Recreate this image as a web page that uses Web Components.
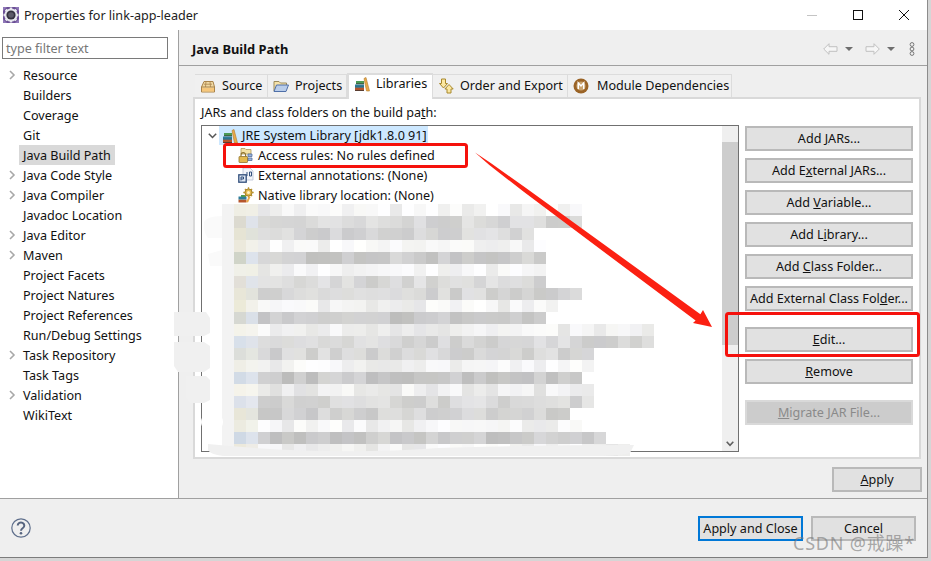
<!DOCTYPE html>
<html>
<head>
<meta charset="utf-8">
<title>Properties for link-app-leader</title>
<style>
  html, body { margin: 0; height: 100%; overflow: hidden; background: #d6d6d6; }
  body { position: relative; }
</style>
</head>
<body>

<props-dialog>
  <win-title slot="title" label="Properties for link-app-leader"></win-title>
  <pref-nav slot="nav"></pref-nav>
  <page-head slot="head" label="Java Build Path"></page-head>
  <tab-strip slot="tabs"></tab-strip>
  <span slot="hint">JARs and class folders on the build pa<u>t</u>h:</span>
  <lib-tree slot="tree"></lib-tree>
  <side-button slot="actions"><span>Add <u>J</u>ARs...</span></side-button>
  <side-button slot="actions"><span>Add E<u>x</u>ternal JARs...</span></side-button>
  <side-button slot="actions"><span>Add <u>V</u>ariable...</span></side-button>
  <side-button slot="actions"><span>Add L<u>i</u>brary...</span></side-button>
  <side-button slot="actions"><span>Add <u>C</u>lass Folder...</span></side-button>
  <side-button slot="actions"><span>Add External Class Fol<u>d</u>er...</span></side-button>
  <side-button slot="actions" class="spaced"><span><u>E</u>dit...</span></side-button>
  <side-button slot="actions"><span><u>R</u>emove</span></side-button>
  <side-button slot="actions" class="spaced" disabled><span><u>M</u>igrate JAR File...</span></side-button>
  <side-button slot="apply" kind="apply"><span><u>A</u>pply</span></side-button>
  <side-button slot="footer" kind="default"><span>Apply and Close</span></side-button>
  <side-button slot="footer" kind="cancel"><span>Cancel</span></side-button>
</props-dialog>
<markup-layer></markup-layer>

<script>
// small pixel style icons, all on a 16 box
const ICONS = {
  gear: `<rect width="16" height="16" rx="1" fill="#6b4f96"/><path d="M0 0h4L0 4zM16 0v4l-4-4zM0 16v-4l4 4zM16 16h-4l4-4z" fill="#8f78b8"/><circle cx="8" cy="8" r="6.6" fill="#e4e4ea"/><path d="M8 .5v3M8 12.5v3M.5 8h3M12.5 8h3M2.7 2.7l2.1 2.1M11.2 11.2l2.1 2.1M13.3 2.7l-2.1 2.1M4.8 11.2l-2.1 2.1" stroke="#e8e8ee" stroke-width="2.4"/><circle cx="8" cy="8" r="4.6" fill="#34323f"/><circle cx="8" cy="8" r="2.8" fill="#5c5a68"/>`,
  source: `<path d="M1.5 9 4 3.5h9l1.5 5.5v5h-13z" fill="#f0d9a4" stroke="#a9834a"/><path d="M1.5 9h13" stroke="#a9834a"/><path d="M6 3.5 5.5 9M10 3.5l.5 5.5M4 6.2h8" stroke="#a9834a" stroke-width=".8"/><path d="M2 10h12v3.500H2z" fill="#f6c77c"/>`,
  folder: `<path d="M1 13V3.500h5l1.500 1.500h6v2" fill="#f6e2a8" stroke="#9a8a5c"/><path d="M1 13.500 3.500 7H15.500L13 13.500z" fill="#b9cdea" stroke="#4f6fa8"/>`,
  books: `<path d="M1 12h9v3H1z" fill="#b5562c"/><path d="M1 8.500h9v3H1z" fill="#2e7d9a"/><path d="M2 5h8v3H2z" fill="#4b9a55"/><path d="M1 14.500h9M2 7.800h8M1 11.300h9" stroke="#333" stroke-width=".7"/><path d="M10 2.500 12 1.500 15.500 15h-3z" fill="#e9a94a" stroke="#b07a2a" stroke-width=".6"/>`,
  order: `<path d="M3.500 1h4v4.500h2L5.500 10 1.500 5.500h2z" fill="#fbe7a0" stroke="#a8882c"/><path d="M11 6.500 15.200 11H13v4H9v-4H6.900z" fill="#fbe7a0" stroke="#a8882c"/>`,
  module: `<circle cx="8" cy="8" r="7.500" fill="#9a6326"/><circle cx="8" cy="8" r="4.600" fill="#c9a36f"/><path d="M5.300 11V5l2.700 3 2.700-3v6" fill="none" stroke="#fff" stroke-width="1.500"/>`,
  rules: `<path d="M3 7V1.500h4l1 1h5V7z" fill="#f4e2a6" stroke="#b09a5a" stroke-width=".8"/><path d="M10 7h4v2.500h-4zM10 11h4v2.500h-4zM8 9v3.300h2" fill="#9db6dc" stroke="#54709f" stroke-width=".8"/><path d="M3 9.500V8a2.300 2.300 0 0 1 4.600 0v1.500" fill="none" stroke="#8f7330" stroke-width="1.200"/><rect x="1" y="9.500" width="8.500" height="6" rx=".6" fill="#e3b94d" stroke="#8f7330" stroke-width=".8"/>`,
  annot: `<path d="M5 1h7l3 3v9H5z" fill="#f2f4f9" stroke="#b9c2d4" stroke-width=".8"/><path d="M9 5v4M11.500 5h2v4h-2z" stroke="#34527f" fill="none"/><rect x=".8" y="7.800" width="7.400" height="7.400" fill="#dfe7f3" stroke="#2f4c7a" stroke-width="1.300"/><path d="M3 13.500V10h2.500v2H3" fill="none" stroke="#2f4c7a"/>`,
  native: `<path d="M.5 12.500h8v3h-8z" fill="#b5562c"/><path d="M.5 9.500h8v3h-8z" fill="#2e7d9a"/><path d="M3 8h5v2H3z" fill="#4b9a55"/><circle cx="10.500" cy="5.500" r="3.600" fill="#e3b94d" stroke="#9a7a2a"/><path d="M10.500.3v2M10.500 8.700v2M5.300 5.500h2M13.700 5.500h2M6.900 1.900l1.400 1.400M12.700 7.700l1.400 1.400M14.100 1.900l-1.400 1.400M8.300 7.700 6.900 9.100" stroke="#b8932f" stroke-width="1.300"/><circle cx="10.500" cy="5.500" r="1.500" fill="#fff3c4"/><path d="M8 15 11 9l1.500 1L10 15.500z" fill="#e9a94a"/>`
};
const icon = (name, size = 16) => `<svg width="${size}" height="${size}" viewBox="0 0 16 16" style="flex:none;display:block">${ICONS[name]}</svg>`;

class PropsDialog extends HTMLElement {
  connectedCallback() {
    this.attachShadow({ mode: 'open' }).innerHTML = `
    <style>
      :host { display: flex; flex-direction: column; width: 928px; height: 558px; box-sizing: border-box;
        background: #efefef; color: #111; border-right: 1px solid #8c8c8c; border-bottom: 1px solid #7c7c7c;
        font: 12.6px "Noto Sans", sans-serif; line-height: 20px; }
      .main { display: flex; height: 468px; }
      .nav { width: 178px; flex: none; background: #fff; border-right: 1px solid #a0a0a0; }
      .page { flex: 1; min-width: 0; display: flex; flex-direction: column; }
      .body { padding: 7px 6px 0 14px; display: flex; flex-direction: column; }
      .folder { box-sizing: border-box; height: 362px; border: 2px solid #d9d9d9; background: #fff; padding: 4px 6px 0 6px; }
      .hint { height: 22px; line-height: 20px; }
      .cols { display: flex; gap: 6px; }
      .actions { display: flex; flex-direction: column; gap: 7px; padding-top: 1px; }
      .apply { display: flex; justify-content: flex-end; margin: 8px -1px 0 0; }
      .foot { box-sizing: border-box; height: 59px; flex: none; border-top: 1px solid #a0a0a0; display: flex;
        align-items: flex-start; padding: 17px 11px 0 11px; gap: 8px; }
      .help { margin: 2px auto 0 0; }
    </style>
    <slot name="title"></slot>
    <div class="main">
      <div class="nav"><slot name="nav"></slot></div>
      <div class="page">
        <slot name="head"></slot>
        <div class="body">
          <slot name="tabs"></slot>
          <div class="folder">
            <div class="hint"><slot name="hint"></slot></div>
            <div class="cols">
              <slot name="tree"></slot>
              <div class="actions"><slot name="actions"></slot></div>
            </div>
          </div>
          <div class="apply"><slot name="apply"></slot></div>
        </div>
      </div>
    </div>
    <div class="foot">
      <svg class="help" width="20" height="20" viewBox="0 0 20 20"><circle cx="10" cy="10" r="9.200" fill="none" stroke="#5f6f8c" stroke-width="1.200"/><path d="M6.700 7.500a3.300 3 0 1 1 5.200 2.500c-1.300.9-1.900 1.300-1.900 2.800" fill="none" stroke="#56647f" stroke-width="2"/><circle cx="10" cy="15.300" r="1.300" fill="#56647f"/></svg>
      <slot name="footer"></slot>
    </div>`;
  }
}

class WinTitle extends HTMLElement {
  connectedCallback() {
    this.attachShadow({ mode: 'open' }).innerHTML = `
    <style>
      :host { display: flex; align-items: center; height: 30px; flex: none; background: #fff; padding-left: 3px; }
      span { margin-left: 5px; flex: 1; color: #222; padding-top: 2px; }
      .ctl { display: flex; align-items: center; }
      .ctl div { width: 46px; height: 30px; display: flex; align-items: center; justify-content: center; }
    </style>
    ${icon('gear')}
    <span>${this.getAttribute('label')}</span>
    <div class="ctl">
      <div><svg width="10" height="10"><path d="M0 5.500h10" stroke="#c4c4c4"/></svg></div>
      <div><svg width="10" height="10"><rect x=".5" y=".5" width="9" height="9" fill="none" stroke="#111"/></svg></div>
      <div><svg width="10" height="10"><path d="M0 0l10 10M10 0 0 10" stroke="#111"/></svg></div>
    </div>`;
  }
}

class PrefNav extends HTMLElement {
  connectedCallback() {
    // name, has children
    const items = [['Resource',1],['Builders'],['Coverage'],['Git'],['Java Build Path',0,1],['Java Code Style',1],
      ['Java Compiler',1],['Javadoc Location'],['Java Editor',1],['Maven',1],['Project Facets'],['Project Natures'],
      ['Project References'],['Run/Debug Settings'],['Task Repository',1],['Task Tags'],['Validation',1],['WikiText']];
    const chevron = `<svg class="chev" width="7" height="10" viewBox="0 0 7 10"><path d="M1 1l4 4-4 4" fill="none" stroke="#a8a8a8" stroke-width="1.600"/></svg>`;
    this.attachShadow({ mode: 'open' }).innerHTML = `
    <style>
      :host { display: block; padding-top: 7px; }
      .filter { box-sizing: border-box; height: 22px; width: 166px; margin-left: 2px; border: 1px solid #7a7a7a;
        color: #777; padding-left: 3px; line-height: 21px; }
      ul { list-style: none; margin: 6px 0 0; padding: 0; }
      li { height: 20px; display: flex; align-items: center; position: relative; padding-left: 19px; }
      li span { padding: 0 4px; height: 20px; line-height: 21px; }
      li.sel span { background: #d9d9d9; }
      .chev { position: absolute; left: 9px; top: 5px; }
    </style>
    <div class="filter">type filter text</div>
    <ul>${items.map(([t, kids, sel]) => `<li class="${sel ? 'sel' : ''}">${kids ? chevron : ''}<span>${t}</span></li>`).join('')}</ul>`;
  }
}

class PageHead extends HTMLElement {
  connectedCallback() {
    const tri = `<svg width="8" height="4"><path d="M0 0h8L4 4z" fill="#6e6e6e"/></svg>`;
    this.attachShadow({ mode: 'open' }).innerHTML = `
    <style>
      :host { display: flex; align-items: center; box-sizing: border-box; height: 36px; flex: none; border-bottom: 1px solid #a0a0a0; padding: 2px 12px 0 13px; }
      b { flex: 1; font-weight: 700; font-size: 12.9px; }
      .tools { display: flex; align-items: center; gap: 7px; }
    </style>
    <b>${this.getAttribute('label')}</b>
    <div class="tools">
      <svg width="15" height="12" viewBox="0 0 15 12"><path d="M.7 6 6 .7v3h8v4.600H6v3z" fill="#f6f6f6" stroke="#c0c0c0"/></svg>${tri}
      <svg width="15" height="12" viewBox="0 0 15 12" style="margin-left:5px"><path d="M14.300 6 9 .7v3H1v4.600h8v3z" fill="#f6f6f6" stroke="#c0c0c0"/></svg>${tri}
      <svg width="6" height="14" viewBox="0 0 6 14" style="margin-left:7px"><g fill="none" stroke="#777"><circle cx="3" cy="2.500" r="1.900"/><circle cx="3" cy="7" r="1.900"/><circle cx="3" cy="11.500" r="1.900"/></g></svg>
    </div>`;
  }
}

class TabStrip extends HTMLElement {
  connectedCallback() {
    const tabs = [['source','Source',73],['folder','Projects',79],['books','Libraries',86,1],['order','Order and Export',135],['module','Module Dependencies',164]];
    this.attachShadow({ mode: 'open' }).innerHTML = `
    <style>
      :host { display: flex; align-items: flex-end; height: 24px; padding-left: 2px; }
      div { box-sizing: border-box; height: 23px; display: flex; align-items: center; gap: 6px; padding: 0 0 0 5px;
        background: #f0f0f0; border: 1px solid #dcdcdc; border-bottom: 0; border-left: 0; white-space: nowrap; }
      div:first-child { border-left: 1px solid #dcdcdc; }
      div.on { background: #fff; height: 26px; margin-bottom: -2px; position: relative; padding-bottom: 6px; border: 2px solid #dcdcdc; border-bottom: 0; border-right-width: 1px; z-index: 1; }
      .last svg { margin-right: 2px; }
    </style>
    ${tabs.map(([ic, t, w, on], i) => `<div class="${on ? 'on' : ''} ${i == 4 ? 'last' : ''}" style="width:${w}px">${icon(ic)}<span>${t}</span></div>`).join('')}`;
  }
}

class MosaicPatch extends HTMLElement {
  connectedCallback() {
    // row: [end x, base grey, tint col1, tint col2]
    const rows = [
      [582,242,'#efeee4','#f0efe6'],[582,215,'#dcdad0','#dfe3ea'],[534,214,'#e6e4d4','#e0e2da'],[546,243,'#ece9dc','#f2f1ea'],
      [546,203,'#d0d4c8','#dde3ec'],[546,241,'#f0f0e8','#f0f0e6'],[546,216,'#e2dfd8','#e0e4ea'],[582,212,'#e8e6d8','#e2e3dc'],
      [560,242,'#ecead8','#f2f1ea'],[546,200,'#d6d8d2','#dae0e8'],[654,238,'#f4f3ea','#f5f4ee'],[654,214,'#d8e0ea','#dfe3ea'],
      [594,212,'#dcdeda','#e4e6e0'],[594,242,'#efeee6','#f3f3ee'],[582,200,'#d2dbe6','#dde3ec'],[594,236,'#f5f3ea','#f6f5ee'],
      [594,216,'#dce1ea','#e4e7ee'],[570,210,'#e8e6d8','#e4e5de'],[582,241,'#ecebe0','#f1f2ea'],[606,202,'#cfd9e5','#dde3ec'],
      [634,240,'#ece9dc','#eeece6']];
    let seed = 7;
    const rnd = () => (seed = (seed * 16807) % 2147483647) / 2147483647;
    const cell = 12, left = 222;
    const html = rows.map(([end, base, t1, t2]) => {
      const n = Math.round((end - left) / cell);
      let cells = '';
      for (let c = 0; c < n; c++) {
        let bg;
        if (c == 0) bg = '#f3f3f3';
        else if (c == 1) bg = t1;
        else if (c == 2) bg = t2;
        else {
          const v = Math.min(255, Math.round(base + (rnd() - .45) * 26));
          const w = Math.round((rnd() - .5) * 5);
          bg = `rgb(${v},${v},${Math.min(255, v + w)})`;
        }
        cells += `<i style="background:${bg}"></i>`;
      }
      return `<div>${cells}</div>`;
    }).join('');
    this.attachShadow({ mode: 'open' }).innerHTML = `
    <style>
      :host { display: block; }
      div { display: flex; height: 12px; }
      i { width: 12px; height: 12px; flex: none; }
    </style>${html}`;
  }
}

class LibTree extends HTMLElement {
  connectedCallback() {
    this.attachShadow({ mode: 'open' }).innerHTML = `
    <style>
      :host { display: block; position: relative; box-sizing: border-box; width: 538px; height: 327px; flex: none;
        border: 1px solid #707070; background: #fff; }
      .row { height: 20px; display: flex; align-items: center; gap: 4px; padding-left: 36px; }
      .row span { white-space: nowrap; padding-top: 2px; }
      .root { padding-left: 6px; gap: 0; height: 19px; }
      .root .hl { display: flex; align-items: center; height: 19px; background: #cde8ff; margin-left: 2px; padding: 0 1px 0 3px; gap: 4px; }
      .root .hl span { padding-top: 0; }
      mosaic-patch { margin: -1px 0 0 20px; position: relative; }
      .bar { position: absolute; top: 0; right: 0; bottom: 0; width: 16px; background: #efefef; }
      .thumb { position: absolute; left: 0; right: 0; top: 16px; height: 203px; background: #cdcdcd; }
      .down { position: absolute; left: 4px; bottom: 4px; }
    </style>
    <div class="bar"><div class="thumb"></div>
      <svg class="down" width="8" height="6" viewBox="0 0 8 6"><path d="M.7.700 4 4.300 7.300.7" fill="none" stroke="#606060" stroke-width="1.600"/></svg></div>
    <div class="row root">
      <svg width="9" height="6" viewBox="0 0 9 6"><path d="M.8.800 4.500 4.500 8.200.8" fill="none" stroke="#555" stroke-width="1.500"/></svg>
      <div class="hl">${icon('books')}<span>JRE System Library [jdk1.8.0 91]</span></div>
    </div>
    <div class="row">${icon('rules')}<span>Access rules: No rules defined</span></div>
    <div class="row">${icon('annot')}<span>External annotations: (None)</span></div>
    <div class="row">${icon('native')}<span>Native library location: (None)</span></div>
    <mosaic-patch></mosaic-patch>`;
  }
}

class SideButton extends HTMLElement {
  connectedCallback() {
    const kind = this.getAttribute('kind');
    const spaced = this.classList.contains('spaced');
    const size = { apply: [90, 25], default: [105, 25], cancel: [105, 25] }[kind] || [168, 25];
    const off = this.hasAttribute('disabled');
    this.attachShadow({ mode: 'open' }).innerHTML = `
    <style>
      :host { display: flex; box-sizing: border-box; width: ${size[0]}px; height: ${size[1]}px; align-items: center; justify-content: center;
        background: ${off ? '#cccccc' : '#e1e1e1'}; color: ${off ? '#8a8a8a' : '#111'};
        border: ${kind == 'default' ? '2px solid #0078d7' : '2px solid ' + (off ? '#d9d9d9' : '#b9b9b9')};
        margin-top: ${spaced ? 9 : 0}px; white-space: nowrap; flex: none; }
    </style><slot></slot>`;
  }
}

class MarkupLayer extends HTMLElement {
  connectedCallback() {
    this.attachShadow({ mode: 'open' }).innerHTML = `
    <style>
      :host { position: absolute; inset: 0; display: block; pointer-events: none; }
      svg { position: absolute; left: 0; top: 0; }
      .mark { position: absolute; left: 793px; top: 530px; font: 18px/26px "Noto Sans", "Noto Sans CJK SC", sans-serif; color: rgba(120,120,120,.62); white-space: nowrap; letter-spacing: .8px; }
    </style>
    <svg width="931" height="561">
      <!-- pale smudges left by whoever blurred the class path -->
      <g fill="#f0f0f0">
        <path d="M174 312h32l4 6v15l-6 3h-30zM174 342h30l6 4v22l-6 4h-26l-4-6zM186 376h20l4 4v20l-6 3h-14l-4-6zM208 444q120 12 230 4 100-3 196-3l-4 8q-10 3-30 3H230q-18 0-22-6z"/>
      </g>
      <g fill="#fafafa">
        <path d="M204 222q3-6 18-6v22h-14q-5-6-4-16zM208 254l14-4v16h-12z"/>
      </g>
      <ellipse cx="212" cy="422" rx="11" ry="10" fill="#fff"/>
      <g fill="none" stroke="#f5110c" stroke-width="3">
        <rect x="224.500" y="144.500" width="242" height="22" rx="2"/>
        <rect x="726.500" y="313.500" width="192" height="42" rx="2"/>
      </g>
      <path d="M475 152.500 490.700 163 526.300 188.200 700.400 314.200 703 310 712 327 693 323 695.600 320.600 523.700 191.800 489.300 165z" fill="#fb2012"/>
    </svg>
    <div class="mark">CSDN @戒躁*</div>`;
  }
}

customElements.define('props-dialog', PropsDialog);
customElements.define('win-title', WinTitle);
customElements.define('pref-nav', PrefNav);
customElements.define('page-head', PageHead);
customElements.define('tab-strip', TabStrip);
customElements.define('mosaic-patch', MosaicPatch);
customElements.define('lib-tree', LibTree);
customElements.define('side-button', SideButton);
customElements.define('markup-layer', MarkupLayer);
</script>
</body>
</html>
